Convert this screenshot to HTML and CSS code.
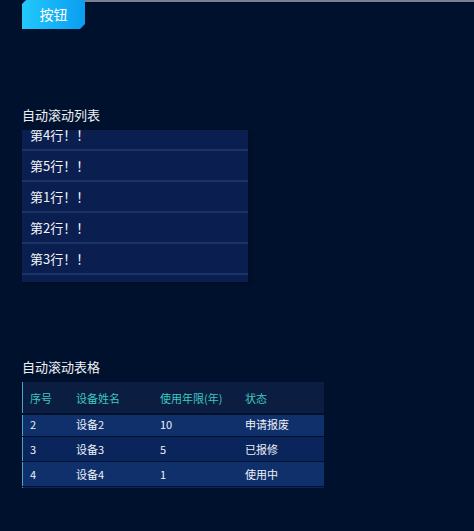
FILE: index.html
```html
<!DOCTYPE html>
<html lang="zh">
<head>
<meta charset="utf-8">
<title>Demo</title>
<link rel="stylesheet" href="styles.css">
</head>
<body>
<div class="topbar">
  <div class="top-gap"></div>
  <button class="btn">按钮</button>
  <div class="top-line"></div>
</div>

<section class="block block-list">
  <h3 class="title">自动滚动列表</h3>
  <div class="list">
    <div class="list-inner">
      <div class="list-row">第4行！！</div>
      <div class="list-row">第5行！！</div>
      <div class="list-row">第1行！！</div>
      <div class="list-row">第2行！！</div>
      <div class="list-row">第3行！！</div>
      <div class="list-row">第4行！！</div>
    </div>
  </div>
</section>

<section class="block block-table">
  <h3 class="title">自动滚动表格</h3>
  <div class="table">
    <div class="thead">
      <span class="c1">序号</span><span class="c2">设备姓名</span><span class="c3">使用年限(年)</span><span class="c4">状态</span>
    </div>
    <div class="tbody">
      <div class="tbody-inner">
        <div class="tr light"><span class="c1">2</span><span class="c2">设备2</span><span class="c3">10</span><span class="c4">申请报废</span></div>
        <div class="tr dark"><span class="c1">3</span><span class="c2">设备3</span><span class="c3">5</span><span class="c4">已报修</span></div>
        <div class="tr light"><span class="c1">4</span><span class="c2">设备4</span><span class="c3">1</span><span class="c4">使用中</span></div>
        <div class="tr dark"><span class="c1">5</span><span class="c2">设备5</span><span class="c3">3</span><span class="c4">使用中</span></div>
      </div>
    </div>
  </div>
</section>
</body>
</html>
```

FILE: styles.css
```css
html, body {
  margin: 0;
  padding: 0;
}
body {
  background: #00112e;
  width: 474px;
  height: 531px;
  overflow: hidden;
  font-family: "Noto Sans CJK SC", "Noto Sans", sans-serif;
  color: #ffffff;
}
.topbar {
  display: flex;
  align-items: flex-start;
  height: 29px;
}
.top-gap {
  width: 22px;
}
.btn {
  width: 63px;
  height: 29px;
  margin: 0;
  padding: 0;
  border: 0;
  background: linear-gradient(to right, #22c8fb, #0b9df0);
  color: #ffffff;
  font-family: "Noto Sans CJK SC", sans-serif;
  font-size: 14px;
  line-height: 29px;
  clip-path: polygon(4px 0, 100% 0, 100% 24px, 58px 100%, 0 100%, 0 4px);
}
.top-line {
  flex: 1;
  height: 2px;
  background: #7c7f8e;
}
.block {
  padding-left: 22px;
}
.block-list {
  margin-top: 76px;
}
.block-table {
  margin-top: 75px;
}
.title {
  margin: 0 0 5px 0;
  font-size: 13px;
  font-weight: normal;
  line-height: 20px;
  color: #eef0f5;
}
.list {
  width: 226px;
  height: 152px;
  overflow: hidden;
  background: #0a1f50;
  box-shadow: 2px 2px 4px rgba(0, 0, 0, 0.25);
}
.list-inner {
  margin-top: -10px;
}
.list-row {
  height: 29px;
  line-height: 29px;
  border-bottom: 2px solid #1b3466;
  padding-left: 8px;
  font-size: 13px;
  color: #f2f4f8;
}
.table {
  width: 302px;
}
.thead {
  display: flex;
  height: 31px;
  align-items: center;
  background: #0b1e42;
  border-left: 1px solid #4aa6c2;
  color: #3cc8bf;
  font-size: 11px;
}
.tbody {
  margin-top: 2px;
  height: 73px;
  overflow: hidden;
}
.tbody-inner {
  margin-top: -3px;
}
.tr {
  display: flex;
  align-items: center;
  height: 24px;
  margin-bottom: 1px;
  border-left: 1px solid #4aa6c2;
  font-size: 11px;
  color: #eef1f6;
}
.tr.light {
  background: #0f306b;
}
.tr.dark {
  background: #0a255c;
}
.c1 {
  width: 46px;
  padding-left: 7px;
}
.c2 {
  width: 84px;
}
.c3 {
  width: 85px;
}
.c4 {
  flex: 1;
}
```
